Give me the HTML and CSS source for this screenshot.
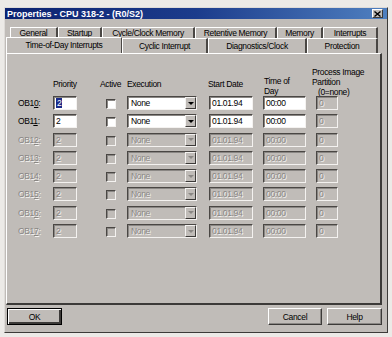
FILE: index.html
```html
<!DOCTYPE html>
<html lang="en">
<head>
    <meta charset="UTF-8">
    <meta name="viewport" content="width=device-width, initial-scale=1.0">
    <title>Properties - CPU 318-2</title>
    <link rel="stylesheet" href="styles.css">
</head>
<body>

<div class="window">
    <div class="titlebar">
        <span class="title">Properties - CPU 318-2 - (R0/S2)</span>
        <span class="close">
            <svg width="7" height="6" viewBox="0 0 7 6"><path d="M0.5 0.5 L6.5 5.5 M6.5 0.5 L0.5 5.5" stroke="#000" stroke-width="1.4"/></svg>
        </span>
    </div>

    <!-- Reihen der Registerkarten -->
    <div class="tabrow back">
        <div class="tab w-general">General</div>
        <div class="tab w-startup">Startup</div>
        <div class="tab w-cycle">Cycle/Clock Memory</div>
        <div class="tab w-retentive">Retentive Memory</div>
        <div class="tab w-memory">Memory</div>
        <div class="tab w-interrupts">Interrupts</div>
    </div>
    <div class="tabrow front">
        <div class="tab active w-tod">Time-of-Day Interrupts</div>
        <div class="tab w-cyclic">Cyclic Interrupt</div>
        <div class="tab w-diag">Diagnostics/Clock</div>
        <div class="tab w-prot">Protection</div>
    </div>

    <div class="panel">
        <div class="grid" id="grid">
            <div class="hd single"></div>
            <div class="hd single">Priority</div>
            <div class="hd single pad-active">Active</div>
            <div class="hd single">Execution</div>
            <div class="hd single">Start Date</div>
            <div class="hd two">Time of<br>Day</div>
            <div class="hd three">Process Image<br>Partition<br><span class="indent">(0=none)</span></div>
        </div>
    </div>

    <div class="footer">
        <div class="btn default">OK</div>
        <div class="btn cancel">Cancel</div>
        <div class="btn">Help</div>
    </div>
</div>

<script>
    const grid = document.getElementById('grid');
    const rows = ['10', '11', '12', '13', '14', '15', '16', '17'];

    rows.forEach((ob, index) => {
        const enabled = index < 2;
        const cls = enabled ? '' : ' disabled';

        const label = document.createElement('div');
        label.className = 'label' + cls;
        label.innerHTML = 'OB1<u>' + ob.slice(1) + '</u>:';
        grid.appendChild(label);

        const prio = document.createElement('div');
        prio.className = 'field prio' + cls;
        prio.innerHTML = index === 0 ? '<span class="sel">2</span>' : '2';
        grid.appendChild(prio);

        const check = document.createElement('div');
        check.className = 'check' + cls;
        grid.appendChild(check);

        const exec = document.createElement('div');
        exec.className = 'select' + cls;
        exec.innerHTML = '<span class="select-text">None</span><span class="select-btn"><i class="arrow"></i></span>';
        grid.appendChild(exec);

        const date = document.createElement('div');
        date.className = 'field date' + cls;
        date.textContent = '01.01.94';
        grid.appendChild(date);

        const time = document.createElement('div');
        time.className = 'field time' + cls;
        time.textContent = '00:00';
        grid.appendChild(time);

        // Prozessabbild ist immer gesperrt
        const pip = document.createElement('div');
        pip.className = 'field pip disabled';
        pip.textContent = '0';
        grid.appendChild(pip);
    });
</script>

</body>
</html>
```

FILE: styles.css
```css
body {
    margin: 0;
    background-color: #eceae7;
    font-family: "Liberation Sans", Arial, sans-serif;
    font-size: 8.5px;
    letter-spacing: -0.35px;
    color: #000;
}
.window {
    box-sizing: border-box;
    width: 384px;
    height: 326px;
    margin: 7px 0 0 4px;
    background-color: #c0bcb8;
    border: 1px solid;
    border-color: #dedbd8 #3c3a38 #3c3a38 #dedbd8;
    display: flex;
    flex-direction: column;
}
.titlebar {
    height: 11px;
    display: flex;
    align-items: center;
    justify-content: space-between;
    padding: 0 4px 0 2px;
    background: linear-gradient(90deg, #0b2270 0%, #1c3c8c 50%, #4f80c0 100%);
}
.title {
    color: #fff;
    font-weight: bold;
    font-size: 9px;
    letter-spacing: 0;
}
.close {
    box-sizing: border-box;
    width: 11px;
    height: 9px;
    display: flex;
    align-items: center;
    justify-content: center;
    background-color: #c0bcb8;
    border: 1px solid;
    border-color: #fff #3c3a38 #3c3a38 #fff;
}
.tabrow {
    display: flex;
}
.tabrow.back {
    margin: 8px 0 0 5px;
    height: 11px;
}
.tabrow.front {
    margin-left: 1px;
    height: 15px;
}
.tab {
    box-sizing: border-box;
    display: flex;
    align-items: center;
    justify-content: center;
    white-space: nowrap;
    border-top: 1px solid #fff;
    border-left: 1px solid #fff;
    border-right: 2px solid #4a4744;
}
.tab.active {
    position: relative;
    height: 16px;
    margin-top: -1px;
    background-color: #c0bcb8;
    z-index: 1;
    border-right: 1px solid #4a4744;
    padding-bottom: 2px;
}
.w-general { width: 48px; }
.w-startup { width: 44px; }
.w-cycle { width: 93px; }
.w-retentive { width: 82px; }
.w-memory { width: 46px; }
.w-interrupts { width: 55px; }
.w-tod { width: 116px; }
.w-cyclic { width: 86px; }
.w-diag { width: 99px; }
.w-prot { width: 71px; }
.panel {
    box-sizing: border-box;
    width: 376px;
    height: 252px;
    margin-left: 1px;
    border-top: 1px solid #fff;
    border-left: 1px solid #fff;
    border-right: 2px solid #3c3a38;
    border-bottom: 2px solid #3c3a38;
    padding: 13px 0 0 11px;
}
.grid {
    display: grid;
    grid-template-columns: 35px 44px 30px 81px 55px 48px 34px;
    grid-template-rows: 29px repeat(8, 18.3px);
    align-items: start;
}
.hd {
    align-self: end;
    line-height: 10px;
    white-space: nowrap;
}
.hd.single {
    margin-bottom: 7px;
}
.hd.two {
    margin-left: 1px;
}
.hd.three {
    margin-left: 1px;
    margin-bottom: -1px;
}
.pad-active {
    margin-left: 3px;
}
.indent {
    padding-left: 6px;
}
.label {
    line-height: 14px;
}
.field {
    box-sizing: border-box;
    height: 14px;
    line-height: 12px;
    padding-left: 2px;
    background-color: #fff;
    border: 1px solid;
    border-color: #4a4744 #f4f2f0 #f4f2f0 #4a4744;
    box-shadow: inset 1px 1px 0 #8a8784;
}
.prio { width: 24px; }
.date { width: 44px; margin-left: 1px; }
.time { width: 43px; }
.pip { width: 22px; margin-left: 5px; }
.sel {
    background-color: #1a2a88;
    color: #fff;
    padding: 0 1px;
}
.check {
    box-sizing: border-box;
    width: 10px;
    height: 10px;
    margin: 3px 0 0 9px;
    background-color: #fff;
    border: 1px solid;
    border-color: #4a4744 #f4f2f0 #f4f2f0 #4a4744;
    box-shadow: inset 1px 1px 0 #8a8784;
}
.select {
    box-sizing: border-box;
    width: 70px;
    height: 14px;
    display: flex;
    background-color: #fff;
    border: 1px solid;
    border-color: #4a4744 #f4f2f0 #f4f2f0 #4a4744;
    box-shadow: inset 1px 1px 0 #8a8784;
}
.select-text {
    flex: 1;
    line-height: 12px;
    padding-left: 3px;
}
.select-btn {
    box-sizing: border-box;
    width: 11px;
    height: 12px;
    display: flex;
    align-items: center;
    justify-content: center;
    background-color: #c0bcb8;
    border: 1px solid;
    border-color: #f4f2f0 #3c3a38 #3c3a38 #f4f2f0;
}
.arrow {
    width: 0;
    height: 0;
    border-left: 3px solid transparent;
    border-right: 3px solid transparent;
    border-top: 3px solid #000;
}
.disabled {
    color: #8a8784;
    text-shadow: 1px 1px 0 #f4f2f0;
}
.field.disabled,
.select.disabled,
.check.disabled {
    background-color: #c0bcb8;
}
.select.disabled .arrow {
    border-top-color: #8a8784;
}
.footer {
    display: flex;
    gap: 5px;
    margin-top: 3px;
    padding: 0 5px 0 2px;
}
.btn {
    box-sizing: border-box;
    width: 55px;
    height: 17px;
    display: flex;
    align-items: center;
    justify-content: center;
    border: 1px solid;
    border-color: #fff #3c3a38 #3c3a38 #fff;
    box-shadow: inset -1px -1px 0 #8a8784;
}
.btn.default {
    border: 1px solid #000;
    box-shadow: inset 1px 1px 0 #fff, inset -2px -2px 0 #3c3a38;
}
.btn.cancel {
    margin-left: auto;
    width: 54px;
}
```
